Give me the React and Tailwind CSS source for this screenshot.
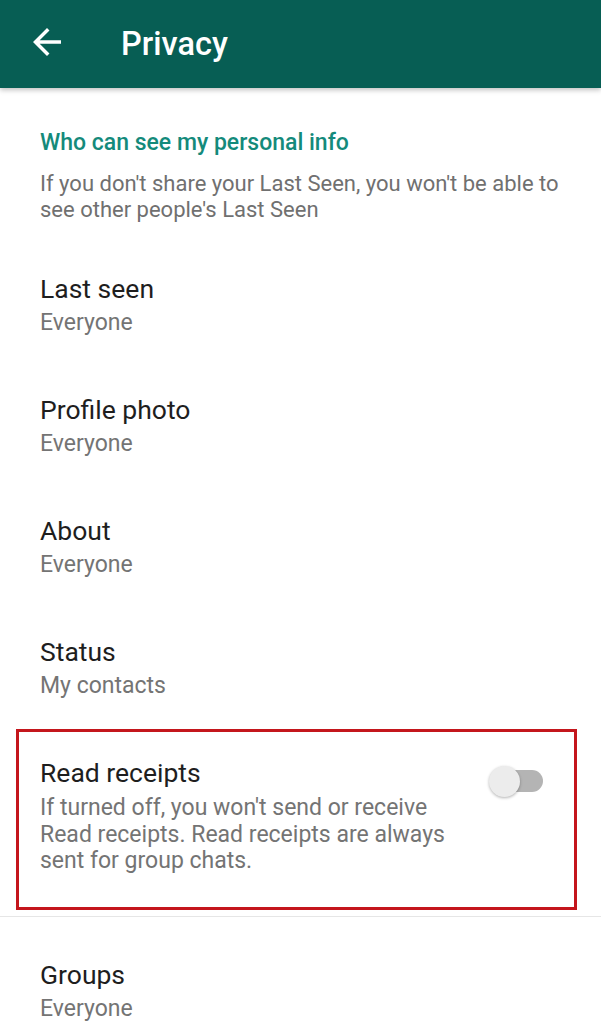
// Privacy settings screen
const ROWS = [
  { title: 'Last seen', value: 'Everyone' },
  { title: 'Profile photo', value: 'Everyone' },
  { title: 'About', value: 'Everyone' },
  { title: 'Status', value: 'My contacts' },
]

function BackArrow() {
  return (
    <svg width="42" height="42" viewBox="0 0 24 24" fill="#ffffff">
      <path d="M20 11H7.83l5.59-5.59L12 4l-8 8 8 8 1.41-1.41L7.83 13H20v-2z" />
    </svg>
  )
}

function Row({ title, value }) {
  return (
    <div className="pl-[40px] pr-[40px] pt-[28px] pb-[29px]">
      <div className="text-[26.5px] leading-[32px] text-[#1e1e1e]">{title}</div>
      <div className="mt-[4px] text-[23px] leading-[28px] text-[#747474]">{value}</div>
    </div>
  )
}

function Toggle() {
  return (
    <div className="relative w-[54px] h-[31px] shrink-0">
      <div className="absolute right-0 top-[4.5px] w-[46px] h-[22px] rounded-full bg-[#b4b4b4]" />
      <div className="absolute left-0 top-0 w-[31px] h-[31px] rounded-full bg-[#ececec] shadow-[0_1px_3px_rgba(0,0,0,0.3)]" />
    </div>
  )
}

export default function App() {
  return (
    <div className="w-[601px] h-[1024px] overflow-hidden bg-white font-['Roboto','Liberation_Sans',sans-serif]">
      {/* Top bar */}
      <div className="relative z-10 h-[88px] bg-[#075e54] flex items-center shadow-[0_2px_5px_rgba(0,0,0,0.25)]">
        <div className="ml-[26px] mt-[-4px]">
          <BackArrow />
        </div>
        <div className="ml-[53px] text-[32.5px] font-medium text-white mt-[1px]">Privacy</div>
      </div>

      {/* Section header */}
      <div className="pl-[40px] pr-[40px] pt-[42px]">
        <div className="text-[23px] leading-[26px] font-medium text-[#148a7b]">Who can see my personal info</div>
        <div className="mt-[15px] text-[22px] leading-[26px] text-[#707070]">
          If you don't share your Last Seen, you won't be able to see other people's Last Seen
        </div>
      </div>

      <div className="mt-[22px]">
        {ROWS.map(r => <Row key={r.title} {...r} />)}
      </div>

      {/* Read receipts, highlighted */}
      <div className="mx-[16px] w-[561px] border-[3px] border-[#c4161c] pl-[21px] pr-[31px] pt-[25px] pb-[32px] flex items-start">
        <div className="flex-1">
          <div className="text-[26.5px] leading-[32px] text-[#1e1e1e]">Read receipts</div>
          <div className="mt-[6px] max-w-[428px] text-[23px] leading-[26.5px] text-[#747474]">
            If turned off, you won't send or receive Read receipts. Read receipts are always sent for group chats.
          </div>
        </div>
        <div className="mt-[8.5px]">
          <Toggle />
        </div>
      </div>

      <div className="mt-[6px] h-[1px] bg-[#e6e6e6]" />

      <div className="pl-[40px] pt-[42px]">
        <div className="text-[26.5px] leading-[32px] text-[#1e1e1e]">Groups</div>
        <div className="mt-[4px] text-[23px] leading-[28px] text-[#747474]">Everyone</div>
      </div>
    </div>
  )
}
